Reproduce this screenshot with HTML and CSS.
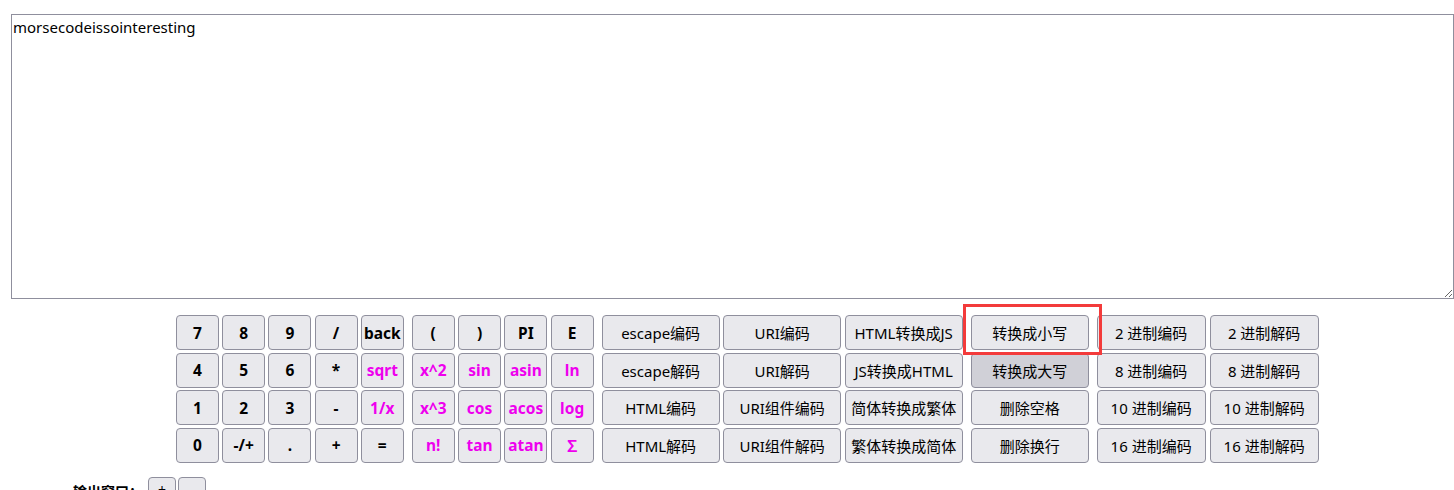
FILE: index.html
```html
<!DOCTYPE html>
<html lang="zh">
<head>
<meta charset="utf-8">
<title>计算器与编码转换</title>
<link rel="stylesheet" href="styles.css">
</head>
<body>
<div class="page">
  <textarea class="input">morsecodeissointeresting</textarea>
  <div class="pad">
    <div class="grp calc5">
      <button class="k">7</button><button class="k">8</button><button class="k">9</button><button class="k">/</button><button class="k">back</button>
      <button class="k">4</button><button class="k">5</button><button class="k">6</button><button class="k">*</button><button class="k f">sqrt</button>
      <button class="k">1</button><button class="k">2</button><button class="k">3</button><button class="k">-</button><button class="k f">1/x</button>
      <button class="k">0</button><button class="k">-/+</button><button class="k">.</button><button class="k">+</button><button class="k">=</button>
    </div>
    <div class="grp calc4">
      <button class="k">(</button><button class="k">)</button><button class="k">PI</button><button class="k">E</button>
      <button class="k f">x^2</button><button class="k f">sin</button><button class="k f">asin</button><button class="k f">ln</button>
      <button class="k f">x^3</button><button class="k f">cos</button><button class="k f">acos</button><button class="k f">log</button>
      <button class="k f">n!</button><button class="k f">tan</button><button class="k f">atan</button><button class="k f">∑</button>
    </div>
    <div class="grp conv3">
      <button class="t">escape编码</button><button class="t">URI编码</button><button class="t">HTML转换成JS</button>
      <button class="t">escape解码</button><button class="t">URI解码</button><button class="t">JS转换成HTML</button>
      <button class="t">HTML编码</button><button class="t">URI组件编码</button><button class="t">简体转换成繁体</button>
      <button class="t">HTML解码</button><button class="t">URI组件解码</button><button class="t">繁体转换成简体</button>
    </div>
    <div class="grp conv1">
      <button class="t mark">转换成小写</button>
      <button class="t hover">转换成大写</button>
      <button class="t">删除空格</button>
      <button class="t">删除换行</button>
    </div>
    <div class="grp base2">
      <button class="t">2 进制编码</button><button class="t">2 进制解码</button>
      <button class="t">8 进制编码</button><button class="t">8 进制解码</button>
      <button class="t">10 进制编码</button><button class="t">10 进制解码</button>
      <button class="t">16 进制编码</button><button class="t">16 进制解码</button>
    </div>
  </div>
  <div class="out">
    <span class="out-label">输出窗口：</span>
    <button class="sm">+</button><button class="sm">-</button>
  </div>
</div>
</body>
</html>
```
FILE: styles.css
```css
html, body {
  margin: 0;
  padding: 0;
  background: #fff;
}
body {
  font-family: "Noto Sans", "Noto Sans CJK SC", sans-serif;
  color: #000;
  overflow: hidden;
}
.page {
  padding: 14px 0 0 11px;
}
.input {
  display: block;
  box-sizing: border-box;
  width: 1443px;
  height: 285px;
  margin: 0;
  padding: 1px 1px;
  border: 1px solid #8f8f9d;
  font-family: "Noto Sans", "Noto Sans CJK SC", sans-serif;
  font-size: 15px;
  line-height: 22px;
  color: #000;
  resize: both;
  outline: none;
}
.pad {
  display: flex;
  gap: 8px;
  margin: 16px 0 0 165px;
}
.grp {
  display: grid;
  grid-auto-rows: 35px;
  row-gap: 2.6px;
}
.calc5 { grid-template-columns: repeat(5, 43px); column-gap: 3.2px; }
.calc4 { grid-template-columns: repeat(4, 43px); column-gap: 3.3px; }
.conv3 { grid-template-columns: repeat(3, 118px); column-gap: 3.5px; }
.conv1 { grid-template-columns: 118px; }
.base2 { grid-template-columns: repeat(2, 109px); column-gap: 4px; }

button {
  box-sizing: border-box;
  margin: 0;
  padding: 0;
  background: #e9e9ed;
  border: 1px solid #8f8f9d;
  border-radius: 4px;
  color: #000;
  font-family: "Noto Sans", "Noto Sans CJK SC", sans-serif;
  white-space: nowrap;
}
.k {
  font-size: 15.5px;
  font-weight: 700;
}
.k.f { color: #ee00ee; }
.t {
  font-size: 15px;
  font-weight: 400;
}
.hover { background: #d0d0d7; }
.mark { position: relative; }
.mark::after {
  content: "";
  position: absolute;
  left: -9px;
  top: -12px;
  width: 139px;
  height: 51px;
  box-sizing: border-box;
  border: 3px solid #f33b3b;
  pointer-events: none;
}
.out {
  display: flex;
  align-items: flex-start;
  margin: 14px 0 0 62px;
}
.out-label {
  font-size: 14px;
  font-weight: 700;
  margin-top: 4px;
  margin-right: 5px;
}
.sm {
  width: 28px;
  height: 26px;
  margin-right: 2px;
  font-size: 14px;
}
```
